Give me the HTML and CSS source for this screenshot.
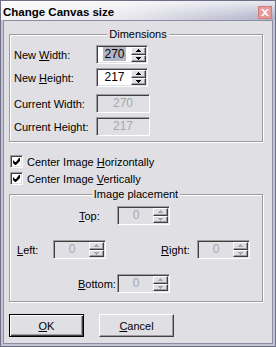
FILE: index.html
```html
<!DOCTYPE html>
<html lang="en">
<head>
    <meta charset="UTF-8">
    <title>Change Canvas size</title>
    <link rel="stylesheet" href="styles.css">
</head>
<body>
    <div class="window">
        <div class="titlebar">
            <span class="title">Change Canvas size</span>
            <span class="close">
                <svg width="8" height="7" viewBox="0 0 8 7"><path d="M0 0h2l2 2 2-2h2L5 3.5 8 7H6L4 5 2 7H0l3-3.5z" fill="#fff"/></svg>
            </span>
        </div>
        <div class="client">
            <fieldset class="group dims">
                <legend>Dimensions</legend>
                <div class="row">
                    <label class="lbl">New <u>W</u>idth:</label>
                    <div class="spin">
                        <span class="field"><span class="sel">270</span></span>
                        <span class="spin-btns">
                            <span class="spin-btn"><svg width="5" height="3"><path d="M2 0h1v1H2zM1 1h3v1H1zM0 2h5v1H0z"/></svg></span>
                            <span class="spin-btn"><svg width="5" height="3"><path d="M0 0h5v1H0zM1 1h3v1H1zM2 2h1v1H2z"/></svg></span>
                        </span>
                    </div>
                </div>
                <div class="row gap-s">
                    <label class="lbl">New <u>H</u>eight:</label>
                    <div class="spin">
                        <span class="field">217</span>
                        <span class="spin-btns">
                            <span class="spin-btn"><svg width="5" height="3"><path d="M2 0h1v1H2zM1 1h3v1H1zM0 2h5v1H0z"/></svg></span>
                            <span class="spin-btn"><svg width="5" height="3"><path d="M0 0h5v1H0zM1 1h3v1H1zM2 2h1v1H2z"/></svg></span>
                        </span>
                    </div>
                </div>
                <div class="row gap-m">
                    <label class="lbl">Current Width:</label>
                    <div class="edit disabled">270</div>
                </div>
                <div class="row gap-s">
                    <label class="lbl">Current Height:</label>
                    <div class="edit disabled">217</div>
                </div>
            </fieldset>

            <div class="checks">
                <div class="check-row">
                    <span class="checkbox"><svg width="7" height="7"><path d="M6 0h1v3L3 7H2L0 5V2l2 2h1z"/></svg></span>
                    <span>Center Image <u>H</u>orizontally</span>
                </div>
                <div class="check-row">
                    <span class="checkbox"><svg width="7" height="7"><path d="M6 0h1v3L3 7H2L0 5V2l2 2h1z"/></svg></span>
                    <span>Center Image <u>V</u>ertically</span>
                </div>
            </div>

            <fieldset class="group placement">
                <legend>Image placement</legend>
                <div class="prow prow-top">
                    <label class="plbl w38"><u>T</u>op:</label>
                    <div class="spin off">
                        <span class="field">0</span>
                        <span class="spin-btns">
                            <span class="spin-btn"><svg width="5" height="3"><path d="M2 0h1v1H2zM1 1h3v1H1zM0 2h5v1H0z"/></svg></span>
                            <span class="spin-btn"><svg width="5" height="3"><path d="M0 0h5v1H0zM1 1h3v1H1zM2 2h1v1H2z"/></svg></span>
                        </span>
                    </div>
                </div>
                <div class="prow prow-mid">
                    <label class="plbl w36"><u>L</u>eft:</label>
                    <div class="spin off">
                        <span class="field">0</span>
                        <span class="spin-btns">
                            <span class="spin-btn"><svg width="5" height="3"><path d="M2 0h1v1H2zM1 1h3v1H1zM0 2h5v1H0z"/></svg></span>
                            <span class="spin-btn"><svg width="5" height="3"><path d="M0 0h5v1H0zM1 1h3v1H1zM2 2h1v1H2z"/></svg></span>
                        </span>
                    </div>
                    <label class="plbl w36 right-lbl"><u>R</u>ight:</label>
                    <div class="spin off">
                        <span class="field">0</span>
                        <span class="spin-btns">
                            <span class="spin-btn"><svg width="5" height="3"><path d="M2 0h1v1H2zM1 1h3v1H1zM0 2h5v1H0z"/></svg></span>
                            <span class="spin-btn"><svg width="5" height="3"><path d="M0 0h5v1H0zM1 1h3v1H1zM2 2h1v1H2z"/></svg></span>
                        </span>
                    </div>
                </div>
                <div class="prow prow-bottom">
                    <label class="plbl w39"><u>B</u>ottom:</label>
                    <div class="spin off">
                        <span class="field">0</span>
                        <span class="spin-btns">
                            <span class="spin-btn"><svg width="5" height="3"><path d="M2 0h1v1H2zM1 1h3v1H1zM0 2h5v1H0z"/></svg></span>
                            <span class="spin-btn"><svg width="5" height="3"><path d="M0 0h5v1H0zM1 1h3v1H1zM2 2h1v1H2z"/></svg></span>
                        </span>
                    </div>
                </div>
            </fieldset>

            <div class="buttons">
                <button class="btn default"><u>O</u>K</button>
                <button class="btn"><u>C</u>ancel</button>
            </div>
        </div>
    </div>
</body>
</html>
```

FILE: styles.css
```css
body {
    margin: 0;
    font-family: "Liberation Sans", Arial, sans-serif;
    font-size: 11px;
    color: #000;
}

.window {
    width: 276px;
    height: 347px;
    box-sizing: border-box;
    border: 1px solid #6e6e84;
    background: #c4c4d4;
    display: flex;
    flex-direction: column;
}

.titlebar {
    height: 19px;
    flex: none;
    display: flex;
    align-items: center;
    justify-content: space-between;
    padding: 0 3px 0 2px;
    background:
        linear-gradient(to bottom, rgba(255, 255, 255, 0.7), rgba(255, 255, 255, 0) 90%),
        linear-gradient(to right, #f4f4f6 0%, #e8e8ee 45%, #b2b2ca 100%);
}

.title {
    font-weight: bold;
    font-size: 11.5px;
    padding-top: 2px;
}

.close {
    width: 14px;
    height: 13px;
    box-sizing: border-box;
    margin-top: 3px;
    background: #e89a98;
    border: 1px solid #d27c7a;
    display: flex;
    align-items: center;
    justify-content: center;
}

.client {
    flex: 1;
    margin: 0 2px 2px;
    border: 1px solid #8c8ca2;
    background: #e0dfe3;
}

/* group boxes */
.group {
    margin: 0 0 0 5px;
    padding: 0;
    width: 254px;
    box-sizing: border-box;
    border: 1px solid #9d9da1;
    box-shadow: 1px 1px 0 #fff, inset 1px 1px 0 #fff;
}

.group legend {
    margin: 0 auto;
    padding: 0 2px;
    line-height: 13px;
    background: #e0dfe3;
}

.dims {
    margin-top: 7px;
    padding: 4px 0 5px 4px;
}

.row {
    display: flex;
    align-items: center;
    height: 19px;
}

.gap-s { margin-top: 4px; }
.gap-m { margin-top: 7px; }

.lbl {
    width: 82px;
    flex: none;
}

/* sunken edit + spin */
.spin, .edit {
    box-sizing: border-box;
    height: 19px;
    width: 52px;
    border: 1px solid;
    border-color: #9d9da1 #fff #fff #9d9da1;
    box-shadow: inset 1px 1px 0 #404040, inset -1px -1px 0 #e0dfe3;
    padding: 1px;
    background: #fff;
    display: flex;
}

.field {
    flex: 1;
    text-align: center;
    line-height: 15px;
    font-size: 12px;
}

.sel {
    background: #b4b5c4;
    padding: 0 1px;
}

.spin-btns {
    width: 15px;
    display: flex;
    flex-direction: column;
}

.spin-btn {
    flex: 1;
    box-sizing: border-box;
    background: #e0dfe3;
    border: 1px solid;
    border-color: #fff #404040 #404040 #fff;
    box-shadow: inset -1px -1px 0 #9d9da1;
    display: flex;
    align-items: center;
    justify-content: center;
}

.spin-btn svg {
    fill: #000;
}

.edit {
    width: 54px;
    justify-content: center;
    line-height: 15px;
    font-size: 12px;
}

.disabled, .off .field {
    background: #e0dfe3;
    color: #a7a6aa;
}

.off {
    width: 53px;
    background: #e0dfe3;
}

.off .spin-btn svg {
    fill: #a7a6aa;
}

/* checkboxes */
.checks {
    margin-top: 11px;
    padding-left: 6px;
}

.check-row {
    height: 17px;
    display: flex;
    align-items: center;
    gap: 4px;
}

.checkbox {
    width: 13px;
    height: 13px;
    box-sizing: border-box;
    border: 1px solid;
    border-color: #9d9da1 #fff #fff #9d9da1;
    box-shadow: inset 1px 1px 0 #404040, inset -1px -1px 0 #e0dfe3;
    background: #fff;
    display: flex;
    align-items: center;
    justify-content: center;
}

/* image placement */
.placement {
    margin-top: 1px;
    padding: 5px 0 8px 0;
}

.prow {
    display: flex;
    align-items: center;
    height: 19px;
}

.prow-top { padding-left: 69px; margin-top: 0; }
.prow-mid { padding-left: 7px; margin-top: 15px; }
.prow-bottom { padding-left: 68px; margin-top: 15px; }

.plbl { flex: none; }
.w36 { width: 36px; }
.w38 { width: 38px; }
.w39 { width: 39px; }
.right-lbl { margin-left: 55px; }

/* buttons */
.buttons {
    margin: 12px 0 0 5px;
    display: flex;
    gap: 15px;
}

.btn {
    width: 75px;
    height: 23px;
    box-sizing: border-box;
    font-family: inherit;
    font-size: 11px;
    color: #000;
    background: #e0dfe3;
    border: 1px solid;
    border-color: #fff #404040 #404040 #fff;
    box-shadow: inset -1px -1px 0 #9d9da1;
    padding: 0;
}

.btn.default {
    border: 1px solid #000;
    box-shadow: inset 1px 1px 0 #fff, inset -1px -1px 0 #404040, inset -2px -2px 0 #9d9da1;
}
```
